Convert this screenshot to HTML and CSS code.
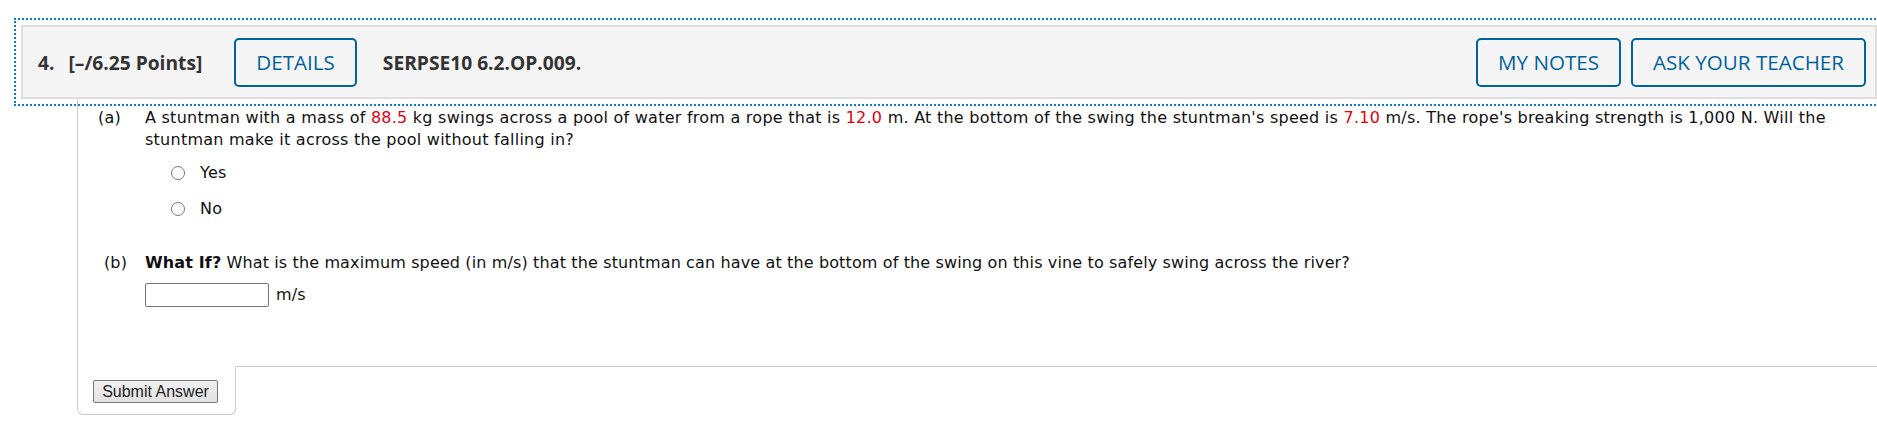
FILE: index.html
```html
<!DOCTYPE html>
<html lang="en">
<head>
    <meta charset="UTF-8">
    <title>Question 4</title>
    <link rel="stylesheet" href="styles.css">
</head>
<body>
    <div class="question">
        <div class="qhead">
            <span class="num">4.</span>
            <span class="points">[&ndash;/6.25 Points]</span>
            <button class="btn btn-details">DETAILS</button>
            <span class="code">SERPSE10 6.2.OP.009.</span>
            <span class="spacer"></span>
            <button class="btn">MY NOTES</button>
            <button class="btn">ASK YOUR TEACHER</button>
        </div>
        <div class="qbody">
            <div class="part part-a">
                <span class="label">(a)</span>
                <div class="ptext">
                    <p>A stuntman with a mass of <span class="red">88.5</span> kg swings across a pool of water from a rope that is <span class="red">12.0</span> m. At the bottom of the swing the stuntman's speed is <span class="red">7.10</span> m/s. The rope's breaking strength is 1,000 N. Will the stuntman make it across the pool without falling in?</p>
                    <ul class="choices">
                        <li><span class="radio"></span>Yes</li>
                        <li><span class="radio"></span>No</li>
                    </ul>
                </div>
            </div>
            <div class="part part-b">
                <span class="label">(b)</span>
                <div class="ptext">
                    <p><b>What If?</b> What is the maximum speed (in m/s) that the stuntman can have at the bottom of the swing on this vine to safely swing across the river?</p>
                    <div class="answer"><input type="text" class="field"><span class="unit">m/s</span></div>
                </div>
            </div>
        </div>
        <div class="qfoot">
            <div class="tab"><button class="submit">Submit Answer</button></div>
            <div class="rest"></div>
        </div>
    </div>
</body>
</html>
```

FILE: styles.css
```css
*{
    margin: 0;
    padding: 0;
    box-sizing: border-box;
}
body{
    background: #fff;
    font-family: "DejaVu Sans", Verdana, sans-serif;
    font-size: 16px;
    color: #111;
    overflow: hidden;
}
.question{
    margin: 25px 0 0 21px;
}
.qhead{
    display: flex;
    align-items: center;
    height: 74px;
    padding: 0 9px 0 15px;
    background: #f5f5f5;
    border: 2px solid #dedede;
    outline: 2px dotted #0a7ad8;
    outline-offset: 5px;
    font-family: "Open Sans", sans-serif;
    font-size: 19.2px;
    font-weight: bold;
    color: #333;
}
.qhead .points{
    margin-left: 14px;
}
.qhead .code{
    margin-left: 26px;
}
.qhead .spacer{
    flex: 1;
}
.btn{
    height: 49px;
    padding: 0 20px;
    margin-left: 10px;
    background: #f5f5f5;
    border: 2px solid #00639c;
    border-radius: 5px;
    font-family: "Open Sans", sans-serif;
    font-size: 20.6px;
    color: #00639c;
}
.qhead .btn-details{
    margin-left: 32px;
}
.qbody{
    margin-left: 56px;
    border-left: 1px solid #ccc;
    padding: 8px 0 59px;
}
.part{
    display: flex;
    line-height: 22px;
}
.part-a{
    padding-left: 20px;
    letter-spacing: 0.25px;
}
.part-a .label{
    width: 47px;
    flex-shrink: 0;
}
.part-b{
    padding-left: 26px;
    margin-top: 25px;
    letter-spacing: 0.13px;
}
.part-b .label{
    width: 41px;
    flex-shrink: 0;
}
.red{
    color: #e4000f;
}
.choices{
    list-style: none;
    margin-top: 4px;
    padding-left: 26px;
}
.choices li{
    display: flex;
    align-items: center;
    height: 36px;
}
.radio{
    width: 14px;
    height: 14px;
    margin-right: 15px;
    border: 1px solid #777;
    border-radius: 50%;
    background: #fff;
}
.answer{
    display: flex;
    align-items: center;
    margin-top: 9px;
}
.field{
    width: 124px;
    height: 24px;
    border: 1px solid #767676;
    border-radius: 2px;
    background: #fff;
}
.unit{
    margin-left: 7px;
}
.qfoot{
    display: flex;
    margin-left: 56px;
}
.tab{
    padding: 14px 17px 11px 15px;
    border: 1px solid #ccc;
    border-top: 0;
    border-radius: 0 0 6px 6px;
}
.rest{
    flex: 1;
    border-top: 1px solid #ccc;
}
.submit{
    display: block;
    width: 125px;
    height: 23px;
    background: linear-gradient(#f0f0f0, #e2e2e2);
    border: 1px solid #767676;
    border-radius: 2px;
    font-family: "Liberation Sans", Arial, sans-serif;
    font-size: 16px;
    color: #222;
}
```
